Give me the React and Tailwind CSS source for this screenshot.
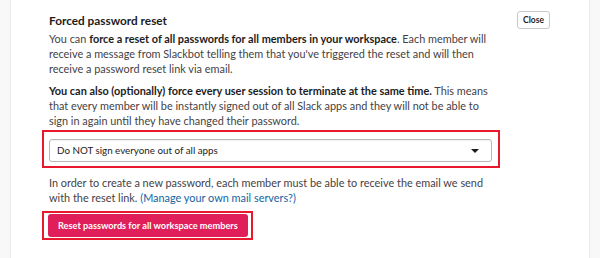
export default function App() {
  return (
    <div className="flex h-[258px] w-[600px] bg-[#f8f8f8] font-['Lato',sans-serif] text-[#454245]">
      <div className="w-[11px] border-r border-[#ececec]" />
      <div className="flex-1 bg-white pl-[38px] pr-[39px] pt-[11px]">
        <div className="flex items-start justify-between">
          <h2 className="mt-[1px] text-[11.8px] font-bold leading-[17px] text-[#1d1c1d]">Forced password reset</h2>
          <button className="h-[18px] rounded-[3px] border border-[#c8c8c8] bg-white px-[5px] text-[8.5px] font-bold leading-[16px] text-[#1d1c1d]">
            Close
          </button>
        </div>
        <div className="w-[446px] text-[10.9px] leading-[15px]">
          <p className="mt-[2px]">
            You can <b className="text-[#1d1c1d]">force a reset of all passwords for all members in your workspace</b>. Each member will
            receive a message from Slackbot telling them that you've triggered the reset and will then receive a password reset link via email.
          </p>
          <p className="mt-[7px]">
            <b className="text-[#1d1c1d]">You can also (optionally) force every user session to terminate at the same time.</b> This means
            that every member will be instantly signed out of all Slack apps and they will not be able to sign in again until they have changed their password.
          </p>
          <div className="-ml-[7px] mt-[2px] w-[458px] border-2 border-[#e8192c] pb-[4px] pl-[5px] pr-[6px] pt-[7px]">
            <div className="flex h-[23px] items-center justify-between rounded-[3px] border border-[#b8b8b8] bg-white pl-[7px] pr-[12px] text-[9.8px] text-[#1d1c1d] shadow-[inset_0_1px_1px_rgba(0,0,0,0.06)]">
              <span>Do NOT sign everyone out of all apps</span>
              <svg width="8" height="4" viewBox="0 0 8 4">
                <path d="M0 0h8L4 4z" fill="#1d1c1d" />
              </svg>
            </div>
          </div>
          <p className="mt-[7px]">
            In order to create a new password, each member must be able to receive the email we send with the reset link.{' '}
            <span className="text-[#1264a3]">(Manage your own mail servers?)</span>
          </p>
          <div className="-ml-[7px] mt-[6px] w-fit border-2 border-[#e8192c] py-[1px] pl-[4px] pr-[3px]">
            <button className="h-[23px] rounded-[3px] bg-[#e01e5a] px-[10px] text-[9.2px] font-bold text-white">
              Reset passwords for all workspace members
            </button>
          </div>
        </div>
      </div>
      <div className="w-[11px] border-l border-[#ececec]" />
    </div>
  );
}
